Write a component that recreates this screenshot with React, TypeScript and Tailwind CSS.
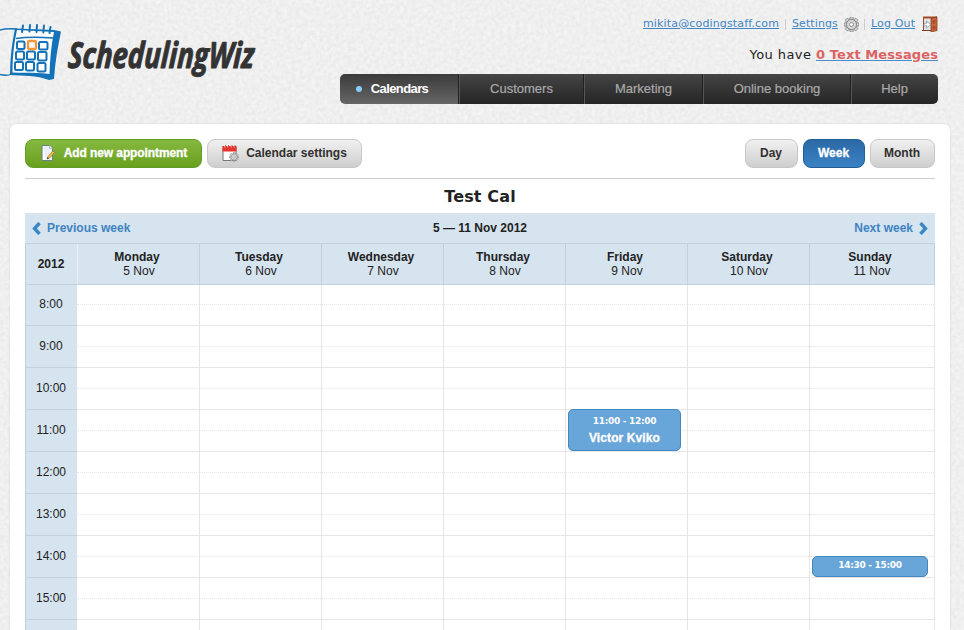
import type { ReactNode } from "react";
import clsx from "clsx";

const nav = [
  { label: "Calendars", width: "w-[119px]", active: true },
  { label: "Customers", width: "w-[125px]" },
  { label: "Marketing", width: "w-[119px]" },
  { label: "Online booking", width: "w-[148px]" },
  { label: "Help", width: "w-[87px]" },
];

const days = [
  { name: "Monday", date: "5 Nov" },
  { name: "Tuesday", date: "6 Nov" },
  { name: "Wednesday", date: "7 Nov" },
  { name: "Thursday", date: "8 Nov" },
  { name: "Friday", date: "9 Nov" },
  { name: "Saturday", date: "10 Nov" },
  { name: "Sunday", date: "11 Nov" },
];

// the last row starts at the bottom edge, its label is below the fold
const hours = ["8:00", "9:00", "10:00", "11:00", "12:00", "13:00", "14:00", "15:00", ""];

const columns = "grid grid-cols-[52px_123px_122px_122px_122px_122px_122px_125px]";

function PaperTexture() {
  return (
    <svg className="absolute inset-0 h-full w-full" aria-hidden="true">
      <filter id="paper" x="0" y="0" width="100%" height="100%" colorInterpolationFilters="sRGB">
        <feTurbulence type="fractalNoise" baseFrequency="0.25" numOctaves="3" seed="4" />
        <feColorMatrix values="0.07 0 0 0 0.903  0.07 0 0 0 0.903  0.07 0 0 0 0.903  0 0 0 0 1" />
      </filter>
      <rect width="100%" height="100%" filter="url(#paper)" />
    </svg>
  );
}

function Logo() {
  return (
    <svg width="270" height="70" viewBox="0 18 270 70" role="img" aria-label="SchedulingWiz">
      <path d="M15 28.500 L54 30 L61 31.500 C58 46 55 62 54 79 L49 80 C36 75 24 76 10 75 C10 58 12 43 15 28.500 Z" fill="#1472b8" />
      <path d="M17 30 L54 32 C51 46 50 60 49.500 74 C36 72 26 73 12.500 72.500 C12.500 57 14 44 17 30 Z" fill="#fafcfd" />
      <path d="M0 30 C6 28 12 28.500 17 29 M11 74 C8 76 4 75.500 0 74.500" fill="none" stroke="#1472b8" strokeWidth="1.500" />
      <path d="M16 38.500 C28 36.500 40 37 53 38" fill="none" stroke="#1472b8" strokeWidth="1.400" />
      <path d="M23 25.500l-1 6.500M30 25l-.5 6.500M37 25l-.5 7M44 25.500l-.7 7M50.500 27l-1 6" stroke="#1472b8" strokeWidth="2" strokeLinecap="round" />
      <g fill="#fff" stroke="#1472b8" strokeWidth="2">
        <rect x="17" y="41.500" width="7.500" height="7.500" rx="1.500" />
        <rect x="39" y="42" width="8.500" height="7.500" rx="1.500" />
        <rect x="16" y="51.500" width="8" height="8" rx="1.500" />
        <rect x="27" y="51.500" width="8" height="8" rx="1.500" />
        <rect x="38" y="52" width="8.500" height="8.500" rx="1.500" />
        <rect x="15" y="62" width="8" height="8" rx="1.500" />
        <rect x="26" y="62" width="8" height="8.500" rx="1.500" />
        <rect x="37.500" y="63" width="8" height="8.500" rx="1.500" />
      </g>
      <rect x="28" y="41" width="8" height="8" rx="1.500" fill="#fff" stroke="#f3983a" strokeWidth="2.300" />
      <text
        transform="translate(67.500 68) skewX(-3)"
        textLength="186"
        lengthAdjust="spacingAndGlyphs"
        className="font-['Open_Sans',sans-serif] text-[36px] font-bold italic"
        fill="#333"
        stroke="#333"
        strokeWidth="1"
        strokeLinejoin="round"
      >
        SchedulingWiz
      </text>
    </svg>
  );
}

const teeth = [0, 45, 90, 135, 180, 225, 270, 315];

function GearShape() {
  return (
    <g fill="none" stroke="#777">
      {teeth.map((angle) => (
        <path key={angle} d="M6.500 0h3l.5 2.500h-4z" transform={`rotate(${angle} 8 8)`} fill="#ddd" strokeWidth=".8" />
      ))}
      <circle cx="8" cy="8" r="5.300" fill="#e5e5e5" strokeWidth=".9" />
      <circle cx="8" cy="8" r="2.200" fill="#fafafa" strokeWidth=".9" />
      <circle cx="8" cy="8" r="3.800" stroke="#aaa" strokeWidth=".7" strokeDasharray="1 1.400" />
    </g>
  );
}

function DoorIcon() {
  return (
    <svg width="16" height="16" viewBox="0 0 16 16">
      <path d="M1 .5h14v13.500H1z" fill="#a54a24" />
      <path d="M2 2.500h7.500V14H2z" fill="#dfe5ea" />
      <path d="M9 2.500 15 .8v13.700L9 16z" fill="#c9683c" stroke="#87391b" strokeWidth=".8" />
      <path d="M10.500 4.500l3-.7v3.500l-3 .5zM10.500 10l3-.5v3.500l-3 .7z" fill="#a84d28" />
      <path d="M2 7.300h2.500V5L8.500 8.500l-4 3.500V9.700H2z" fill="#fff" stroke="#7c8894" strokeWidth=".7" />
      <path d="M0 14.500h9" stroke="#7c3b23" />
    </svg>
  );
}

function NoteIcon() {
  return (
    <svg width="16" height="16" viewBox="0 0 16 16">
      <path d="M2 .5h7.500L12.500 3.500v12H2z" fill="#e9f2fb" stroke="#66758a" strokeWidth=".9" />
      <path d="M3 2v12.500h3z" fill="#fff" />
      <path d="M9.500.5v3h3" fill="#fff" stroke="#9eabb9" strokeWidth=".7" />
      <path d="M7 14l1-2.500 5-5.500 1.700 1.500-5.200 5.500z" fill="#f0c34a" stroke="#9a6b26" strokeWidth=".7" />
      <path d="M7 14l.7-1.700 1.100 1z" fill="#333" />
    </svg>
  );
}

function CalendarIcon() {
  return (
    <svg width="17" height="17" viewBox="0 0 17 17">
      <path d="M1 2h13v13.500H1z" fill="#fff" stroke="#777" />
      <path d="M.5 1h14v5.500H.5z" fill="#e5322c" />
      <path d="M3 0v2.500M6 0v2.500M9.300 0v2.500M12.300 0v2.500" stroke="#fff" strokeWidth="1" />
      <path d="M3.600 0v2.500M6.600 0v2.500M9.900 0v2.500M12.900 0v2.500" stroke="#a8221d" strokeWidth=".7" />
      <g transform="translate(7.500 7.500) scale(.57)">
        <GearShape />
      </g>
    </svg>
  );
}

function Button({ className, children }: { className?: string; children: ReactNode }) {
  return (
    <button
      className={clsx(
        "flex h-[29px] items-center justify-center rounded-[8px] border pb-px text-[12px] font-bold whitespace-nowrap",
        className ?? "border-[#c8c8c8] bg-linear-to-b from-[#f1f1f1] to-[#cecece] pr-px text-[#303030]"
      )}
    >
      {children}
    </button>
  );
}

function Chevron({ flip }: { flip?: boolean }) {
  return (
    <svg width="9" height="13" viewBox="0 0 9 13" className={clsx(flip && "rotate-180")}>
      <path d="M7.500 1 2.500 6.500l5 5.500" fill="none" stroke="#3b87c4" strokeWidth="3.400" />
    </svg>
  );
}

function Appointment({ time, name, className }: { time: string; name?: string; className: string }) {
  return (
    <div
      className={clsx(
        "absolute z-10 rounded-[5px] border border-[#4387bf] bg-[#68a5d8] text-center font-bold text-white",
        className
      )}
    >
      <p className="pt-[5px] font-['DejaVu_Sans',sans-serif] text-[9px] leading-[12px] tracking-[-0.3px]">{time}</p>
      {name && <p className="text-[12px] leading-[22px] tracking-[0.1px] [-webkit-text-stroke:0.3px_white]">{name}</p>}
    </div>
  );
}

export default function App() {
  return (
    <div className="relative h-[630px] w-[964px] overflow-hidden bg-[#efefef] font-['Liberation_Sans',Arial,sans-serif] text-[12px] text-[#222]">
      <PaperTexture />

      <div className="relative">
        <header className="flex h-[124px] justify-between pr-[26px]">
          <div className="pt-[18px]">
            <Logo />
          </div>

          <div className="flex w-[598px] flex-col items-end font-['DejaVu_Sans',Verdana,sans-serif]">
            <div className="mt-[16px] flex h-4 items-center text-[11px] text-[#4185c5]">
              <a className="w-[136px] whitespace-nowrap tracking-[0.15px] underline">mikita@codingstaff.com</a>
              <span className="mx-[6px] h-[11px] w-px bg-[#ccc]" />
              <a className="w-[46px] whitespace-nowrap tracking-[0.1px] underline">Settings</a>
              <svg width="15" height="15" viewBox="0 0 16 16" className="ml-[6px]">
                <GearShape />
              </svg>
              <span className="mr-[6px] ml-[5px] h-[11px] w-px bg-[#ccc]" />
              <a className="w-[45px] whitespace-nowrap tracking-[0.15px] underline">Log Out</a>
              <span className="ml-[6px]">
                <DoorIcon />
              </span>
            </div>
            <p className="mt-[14px] h-[18px] text-[13px] leading-[18px] tracking-[0.42px] whitespace-nowrap">
              You have{" "}
              <a className="font-bold tracking-[0.1px] text-[#dc6264] underline decoration-[#4b8bc6]">0 Text Messages</a>
            </p>

            <nav className="mt-[10px] flex h-[30px] w-[598px] overflow-hidden rounded-[5px] font-['Liberation_Sans',Arial,sans-serif] text-[13px]">
              {nav.map((item, i) => (
                <a
                  key={item.label}
                  className={clsx(
                    "flex items-center justify-center",
                    item.width,
                    i > 0 && "border-l border-[#565656]",
                    i < nav.length - 1 && "shadow-[inset_-1px_0_0_#202020]",
                    item.active
                      ? "bg-linear-to-b from-[#3b3b3b] to-[#666] font-bold tracking-[-0.6px] text-white"
                      : "bg-linear-to-b from-[#454545] to-[#252525] pr-px text-[#aaa] [-webkit-text-stroke:0.2px_#aaa]"
                  )}
                >
                  {item.active && <span className="mr-[9px] -ml-[15px] size-[6px] rounded-full bg-[#89cbfa]" />}
                  {item.label}
                </a>
              ))}
            </nav>
          </div>
        </header>

        <main className="mx-[10px] h-[520px] w-[940px] rounded-t-[6px] bg-white px-[15px] pt-[15px] shadow-[0_0_2px_#ccc]">
          <div className="flex h-[40px] items-start justify-between border-b border-[#ccc]">
            <div className="flex gap-[5px]">
              <Button className="w-[177px] gap-[8px] border-[#629c29] bg-linear-to-b from-[#86b93f] to-[#68a01d] tracking-[-0.1px] text-white [-webkit-text-stroke:0.3px_white]">
                <NoteIcon />
                Add new appointment
              </Button>
              <Button className="w-[155px] gap-[7px] border-[#c8c8c8] bg-linear-to-b from-[#f1f1f1] to-[#cecece] text-[#303030]">
                <CalendarIcon />
                Calendar settings
              </Button>
            </div>
            <div className="grid grid-cols-[53px_62px_65px] gap-[5px]">
              <Button>Day</Button>
              <Button className="border-[#235d96] bg-linear-to-b from-[#2b69a5] to-[#3a82c5] pr-px text-white [-webkit-text-stroke:0.3px_white]">
                Week
              </Button>
              <Button>Month</Button>
            </div>
          </div>

          <h1 className="h-[34px] text-center font-['DejaVu_Sans',Verdana,sans-serif] text-[16px] leading-[35px] font-bold tracking-[0.15px]">
            Test Cal
          </h1>

          <div className="grid h-[30px] grid-cols-3 items-center bg-[#d6e4ef] px-[7px] font-bold">
            <a className="flex items-center gap-[6px] text-[#4083c2]">
              <Chevron />
              Previous week
            </a>
            <p className="text-center">5 — 11 Nov 2012</p>
            <a className="flex items-center justify-end gap-[6px] text-[#4083c2]">
              Next week
              <Chevron flip />
            </a>
          </div>

          <div className={clsx(columns, "h-[42px] border-y border-[#c3d1df] bg-[#d6e4ef]")}>
            <div className="flex items-center justify-center border-l border-[#c3d1df] pr-px font-bold">2012</div>
            {days.map((day, i) => (
              <div
                key={day.name}
                className={clsx(
                  "border-r border-[#c3d1df] pt-[6px] text-center leading-[14px]",
                  i === 0 && "border-l border-l-[#e8f0f6]",
                  i === 6 ? "pr-[4px]" : "pr-[3px]"
                )}
              >
                <p className="font-bold">{day.name}</p>
                <p className="pl-[4px]">{day.date}</p>
              </div>
            ))}
          </div>

          <div className="relative">
            {hours.map((hour, i) => (
              <div key={i} className={clsx(columns, i === 0 ? "h-[41px]" : "h-[42px]")}>
                <div className="flex items-center justify-center border-b border-l border-[#c3d1df] bg-[#d6e4ef] pr-px pb-[2px]">
                  {hour}
                </div>
                {days.map((day) => (
                  <div key={day.name} className="border-r border-b border-[#e4e6e8]">
                    <div className={clsx("border-b border-dotted border-[#e6e6e6]", i === 0 ? "h-[20px]" : "h-[21px]")} />
                  </div>
                ))}
              </div>
            ))}
            <Appointment className="top-[124px] left-[543px] h-[42px] w-[113px]" time="11:00 - 12:00" name="Victor Kviko" />
            <Appointment className="top-[271px] left-[787px] h-[21px] w-[116px] [&>p]:pt-[2px]" time="14:30 - 15:00" />
          </div>
        </main>
      </div>
    </div>
  );
}
